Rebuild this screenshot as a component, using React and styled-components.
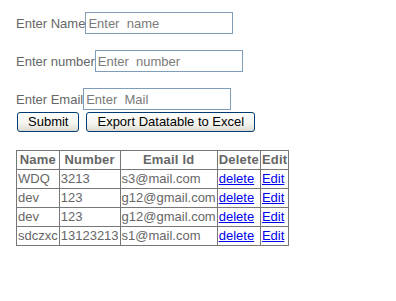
import React from "react";
import styled, { createGlobalStyle } from "styled-components";

const GlobalStyle = createGlobalStyle`
  body {
    margin: 0;
    background: #ffffff;
    font-family: "Liberation Sans", Arial, sans-serif;
    font-size: 13px;
    color: #666666;
  }
`;

const rows = [
  { name: "WDQ", number: "3213", email: "s3@mail.com" },
  { name: "dev", number: "123", email: "g12@gmail.com" },
  { name: "dev", number: "123", email: "g12@gmail.com" },
  { name: "sdczxc", number: "13123213", email: "s1@mail.com" },
];

export default function App() {
  return (
    <>
      <GlobalStyle />
      <Page>
        <FieldRow>
          <Label>Enter Name</Label>
          <Input placeholder="Enter  name" />
        </FieldRow>
        <FieldRow>
          <Label>Enter number</Label>
          <Input placeholder="Enter  number" />
        </FieldRow>
        <FieldRow tight>
          <Label>Enter Email</Label>
          <Input placeholder="Enter  Mail" />
        </FieldRow>
        <ButtonRow>
          <Button>Submit</Button>
          <Button>Export Datatable to Excel</Button>
        </ButtonRow>

        <Table>
          <thead>
            <tr>
              <Th>Name</Th>
              <Th>Number</Th>
              <Th>Email Id</Th>
              <Th>Delete</Th>
              <Th>Edit</Th>
            </tr>
          </thead>
          <tbody>
            {rows.map((r, i) => (
              <tr key={i}>
                <Td>{r.name}</Td>
                <Td>{r.number}</Td>
                <Td>{r.email}</Td>
                <Td>
                  <Link href="#">delete</Link>
                </Td>
                <Td>
                  <Link href="#">Edit</Link>
                </Td>
              </tr>
            ))}
          </tbody>
        </Table>
      </Page>
    </>
  );
}

const Page = styled.div`
  padding: 12px 16px;
  display: flex;
  flex-direction: column;
  align-items: flex-start;
`;

const FieldRow = styled.div`
  display: flex;
  align-items: center;
  height: 22px;
  margin-bottom: ${({ tight }) => (tight ? "2px" : "16px")};
`;

const Label = styled.span`
  color: #666666;
  line-height: 15px;
`;

const Input = styled.input`
  box-sizing: border-box;
  width: 148px;
  height: 22px;
  margin: 0;
  padding: 1px 2px;
  border: 1px solid #7f9db9;
  font-family: "Liberation Sans", Arial, sans-serif;
  font-size: 13px;
  color: #333;
  outline: none;

  &::placeholder {
    color: #7a7a7a;
    white-space: pre;
  }
`;

const ButtonRow = styled.div`
  display: flex;
  gap: 7px;
  margin-left: 1px;
  margin-bottom: 18px;
`;

const Button = styled.button`
  box-sizing: border-box;
  height: 20px;
  padding: 0 10px;
  border: 1px solid #003c74;
  border-radius: 3px;
  background: linear-gradient(#ffffff, #f4f3ee 60%, #dcdad0);
  font-family: "Liberation Sans", Arial, sans-serif;
  font-size: 13px;
  color: #000;
  line-height: 16px;
`;

const Table = styled.table`
  border-collapse: collapse;
  border: 1px solid #777777;
  font-size: 13px;
`;

const Th = styled.th`
  border: 1px solid #777777;
  padding: 1px 1px;
  line-height: 16px;
  font-weight: bold;
  color: #666666;
  letter-spacing: 0.2px;
  text-align: center;
`;

const Td = styled.td`
  border: 1px solid #777777;
  padding: 1px 1px;
  line-height: 16px;
  color: #666666;
  text-align: left;
`;

const Link = styled.a`
  color: #0000ee;
  text-decoration: underline;
`;
